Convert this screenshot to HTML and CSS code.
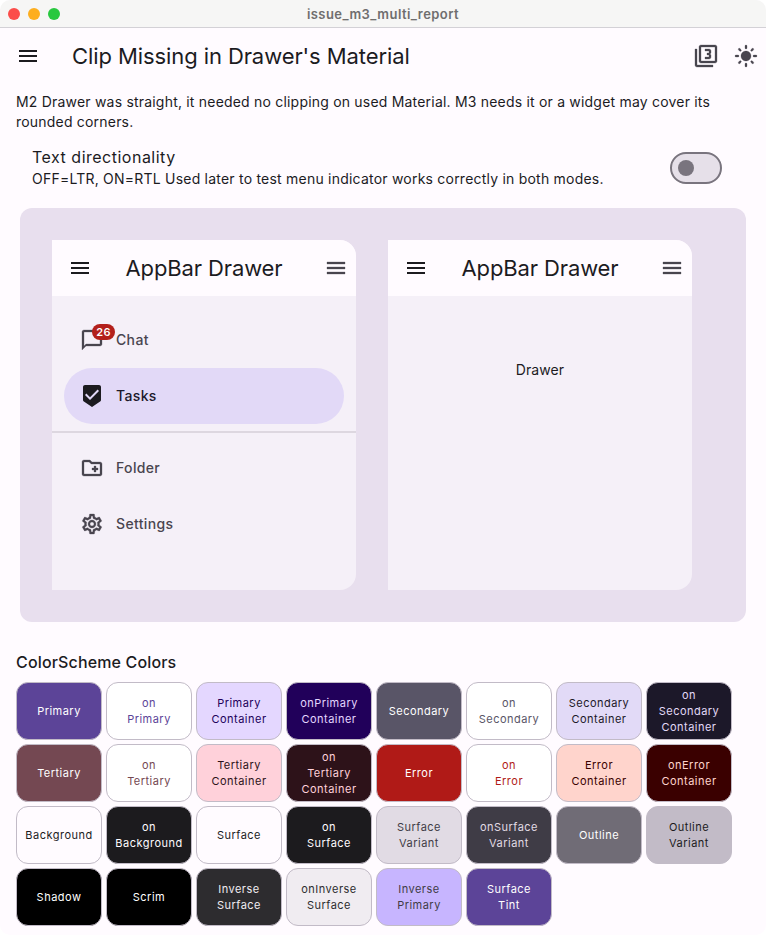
FILE: index.html
```html
<!DOCTYPE html>
<html lang="en">
<head>
    <meta charset="UTF-8">
    <meta name="viewport" content="width=device-width, initial-scale=1.0">
    <title>issue_m3_multi_report</title>
    <link rel="stylesheet" href="styles.css">
</head>

<body>
    <!-- shared icons -->
    <svg class="icon-defs" xmlns="http://www.w3.org/2000/svg">
        <symbol id="i-menu" viewBox="0 0 24 24"><path d="M3 18h18v-2H3v2zm0-5h18v-2H3v2zm0-7v2h18V6H3z"/></symbol>
    </svg>

    <header class="titlebar">
        <div class="lights">
            <span class="light red"></span>
            <span class="light yellow"></span>
            <span class="light green"></span>
        </div>
        <span class="window-title">issue_m3_multi_report</span>
    </header>

    <div class="appbar">
        <svg class="icon dark"><use href="#i-menu"/></svg>
        <h1>Clip Missing in Drawer's Material</h1>
        <svg class="icon mid" viewBox="0 0 24 24"><path d="M21 1H7c-1.1 0-2 .9-2 2v14c0 1.1.9 2 2 2h14c1.1 0 2-.9 2-2V3c0-1.1-.9-2-2-2zm0 16H7V3h14v14zM3 5H1v16c0 1.1.9 2 2 2h16v-2H3V5zm14 8v-1.5c0-.83-.67-1.5-1.5-1.5.83 0 1.5-.67 1.5-1.5V7c0-1.11-.9-2-2-2h-4v2h4v2h-2v2h2v2h-4v2h4c1.1 0 2-.89 2-2z"/></svg>
        <svg class="icon mid sun" viewBox="0 0 24 24"><path d="M12 7c-2.76 0-5 2.24-5 5s2.24 5 5 5 5-2.24 5-5-2.24-5-5-5zM2 13h2c.55 0 1-.45 1-1s-.45-1-1-1H2c-.55 0-1 .45-1 1s.45 1 1 1zm18 0h2c.55 0 1-.45 1-1s-.45-1-1-1h-2c-.55 0-1 .45-1 1s.45 1 1 1zM11 2v2c0 .55.45 1 1 1s1-.45 1-1V2c0-.55-.45-1-1-1s-1 .45-1 1zm0 18v2c0 .55.45 1 1 1s1-.45 1-1v-2c0-.55-.45-1-1-1s-1 .45-1 1zM5.99 4.58c-.39-.39-1.03-.39-1.41 0-.39.39-.39 1.03 0 1.41l1.06 1.06c.39.39 1.03.39 1.41 0s.39-1.03 0-1.41L5.99 4.58zm12.37 12.37c-.39-.39-1.03-.39-1.41 0-.39.39-.39 1.03 0 1.41l1.06 1.06c.39.39 1.03.39 1.41 0 .39-.39.39-1.03 0-1.41l-1.06-1.06zm1.06-10.96c.39-.39.39-1.03 0-1.41-.39-.39-1.03-.39-1.41 0l-1.06 1.06c-.39.39-.39 1.03 0 1.41s1.03.39 1.41 0l1.06-1.06zM7.05 18.36c.39-.39.39-1.03 0-1.41-.39-.39-1.03-.39-1.41 0l-1.06 1.06c-.39.39-.39 1.03 0 1.41s1.03.39 1.41 0l1.06-1.06z"/></svg>
    </div>

    <p class="intro">M2 Drawer was straight, it needed no clipping on used Material. M3 needs it or a widget may cover its rounded corners.</p>

    <div class="setting">
        <div class="setting-text">
            <div class="setting-title">Text directionality</div>
            <div class="setting-sub">OFF=LTR, ON=RTL Used later to test menu indicator works correctly in both modes.</div>
        </div>
        <div class="switch"><span class="thumb"></span></div>
    </div>

    <section class="panel">
        <div class="drawer">
            <div class="drawer-bar">
                <svg class="icon dark"><use href="#i-menu"/></svg>
                <span class="drawer-title">AppBar Drawer</span>
                <svg class="icon mid"><use href="#i-menu"/></svg>
            </div>
            <nav class="drawer-body">
                <div class="dest">
                    <span class="dest-icon">
                        <svg class="icon mid" viewBox="0 0 24 24"><path d="M20 2H4c-1.1 0-2 .9-2 2v18l4-4h14c1.1 0 2-.9 2-2V4c0-1.1-.9-2-2-2zm0 14H6l-2 2V4h16v12z"/></svg>
                        <span class="badge">26</span>
                    </span>
                    <span class="dest-label">Chat</span>
                </div>
                <div class="dest selected">
                    <span class="dest-icon">
                        <svg class="icon dark" viewBox="0 0 24 24"><path d="M19 1H5c-1.1 0-1.99.9-1.99 2L3 15.93c0 .69.35 1.3.88 1.66L12 23l8.11-5.41c.53-.36.88-.97.88-1.66L21 3c0-1.1-.9-2-2-2zm-9 15l-5-5 1.41-1.41L10 13.17l7.59-7.59L19 7l-9 9z"/></svg>
                    </span>
                    <span class="dest-label">Tasks</span>
                </div>
                <div class="divider"></div>
                <div class="dest">
                    <span class="dest-icon">
                        <svg class="icon mid" viewBox="0 0 24 24"><path d="M20 6h-8l-2-2H4c-1.11 0-1.99.89-1.99 2L2 18c0 1.11.89 2 2 2h16c1.11 0 2-.89 2-2V8c0-1.11-.89-2-2-2zm0 12H4V6h5.17l2 2H20v10zm-8-4h2v2h2v-2h2v-2h-2v-2h-2v2h-2z"/></svg>
                    </span>
                    <span class="dest-label">Folder</span>
                </div>
                <div class="dest">
                    <span class="dest-icon">
                        <svg class="icon mid" viewBox="0 0 24 24"><path d="M19.43 12.98c.04-.32.07-.64.07-.98 0-.34-.03-.66-.07-.98l2.11-1.65c.19-.15.24-.42.12-.64l-2-3.46c-.09-.16-.26-.25-.44-.25-.06 0-.12.01-.17.03l-2.49 1c-.52-.4-1.08-.73-1.69-.98l-.38-2.65C14.46 2.18 14.25 2 14 2h-4c-.25 0-.46.18-.49.42l-.38 2.65c-.61.25-1.17.59-1.69.98l-2.49-1c-.06-.02-.12-.03-.18-.03-.17 0-.34.09-.43.25l-2 3.46c-.13.22-.07.49.12.64l2.11 1.65c-.04.32-.07.65-.07.98 0 .33.03.66.07.98l-2.11 1.65c-.19.15-.24.42-.12.64l2 3.46c.09.16.26.25.44.25.06 0 .12-.01.17-.03l2.49-1c.52.4 1.08.73 1.69.98l.38 2.65c.03.24.24.42.49.42h4c.25 0 .46-.18.49-.42l.38-2.65c.61-.25 1.17-.59 1.69-.98l2.49 1c.06.02.12.03.18.03.17 0 .34-.09.43-.25l2-3.46c.12-.22.07-.49-.12-.64l-2.11-1.65zm-1.98-1.71c.04.31.05.52.05.73 0 .21-.02.43-.05.73l-.14 1.13.89.7 1.08.84-.7 1.21-1.27-.51-1.04-.42-.9.68c-.43.32-.84.56-1.25.73l-1.06.43-.16 1.13-.2 1.35h-1.4l-.19-1.35-.16-1.13-1.06-.43c-.43-.18-.83-.41-1.23-.71l-.91-.7-1.06.43-1.27.51-.7-1.21 1.08-.84.89-.7-.14-1.13c-.03-.31-.05-.54-.05-.74s.02-.43.05-.73l.14-1.13-.89-.7-1.08-.84.7-1.21 1.27.51 1.04.42.9-.68c.43-.32.84-.56 1.25-.73l1.06-.43.16-1.13.2-1.35h1.39l.19 1.35.16 1.13 1.06.43c.43.18.83.41 1.23.71l.91.7 1.06-.43 1.27-.51.7 1.21-1.07.85-.89.7.14 1.13zM12 8c-2.21 0-4 1.79-4 4s1.79 4 4 4 4-1.79 4-4-1.79-4-4-4zm0 6c-1.1 0-2-.9-2-2s.9-2 2-2 2 .9 2 2-.9 2-2 2z"/></svg>
                    </span>
                    <span class="dest-label">Settings</span>
                </div>
            </nav>
        </div>

        <div class="drawer">
            <div class="drawer-bar">
                <svg class="icon dark"><use href="#i-menu"/></svg>
                <span class="drawer-title">AppBar Drawer</span>
                <svg class="icon mid"><use href="#i-menu"/></svg>
            </div>
            <div class="drawer-body plain">Drawer</div>
        </div>
    </section>

    <h2 class="colors-title">ColorScheme Colors</h2>
    <div class="colors">
        <div class="swatch primary">Primary</div>
        <div class="swatch on-primary">on<br>Primary</div>
        <div class="swatch primary-container">Primary<br>Container</div>
        <div class="swatch on-primary-container">onPrimary<br>Container</div>
        <div class="swatch secondary">Secondary</div>
        <div class="swatch on-secondary">on<br>Secondary</div>
        <div class="swatch secondary-container">Secondary<br>Container</div>
        <div class="swatch on-secondary-container">on<br>Secondary<br>Container</div>

        <div class="swatch tertiary">Tertiary</div>
        <div class="swatch on-tertiary">on<br>Tertiary</div>
        <div class="swatch tertiary-container">Tertiary<br>Container</div>
        <div class="swatch on-tertiary-container">on<br>Tertiary<br>Container</div>
        <div class="swatch error">Error</div>
        <div class="swatch on-error">on<br>Error</div>
        <div class="swatch error-container">Error<br>Container</div>
        <div class="swatch on-error-container">onError<br>Container</div>

        <div class="swatch background">Background</div>
        <div class="swatch on-background">on<br>Background</div>
        <div class="swatch background">Surface</div>
        <div class="swatch on-background">on<br>Surface</div>
        <div class="swatch surface-variant">Surface<br>Variant</div>
        <div class="swatch on-surface-variant">onSurface<br>Variant</div>
        <div class="swatch outline">Outline</div>
        <div class="swatch outline-variant">Outline<br>Variant</div>

        <div class="swatch black">Shadow</div>
        <div class="swatch black">Scrim</div>
        <div class="swatch inverse-surface">Inverse<br>Surface</div>
        <div class="swatch on-inverse-surface">onInverse<br>Surface</div>
        <div class="swatch inverse-primary">Inverse<br>Primary</div>
        <div class="swatch primary">Surface<br>Tint</div>
    </div>
</body>
</html>
```

FILE: styles.css
```css
html {
    background-color: #fff;
}

body {
    margin: 0;
    height: 935px;
    overflow: hidden;
    border-radius: 10px;
    background-color: #fffbff;
    color: #1c1b1f;
    font-family: Inter, "Liberation Sans", sans-serif;
}

.icon-defs {
    display: none;
}

.icon {
    width: 24px;
    height: 24px;
    flex: none;
    display: block;
}

.icon.dark {
    fill: #1c1b1f;
}

.icon.mid {
    fill: #49454f;
    stroke: #49454f;
    stroke-width: 0.3;
}

/* Window chrome */
.titlebar {
    height: 28px;
    box-sizing: border-box;
    display: flex;
    align-items: center;
    justify-content: center;
    position: relative;
    background-color: #f6f6f5;
    border-bottom: 1px solid #d3d1d6;
}

.lights {
    position: absolute;
    left: 8px;
    top: 8px;
    display: flex;
    gap: 8px;
}

.light {
    width: 12px;
    height: 12px;
    border-radius: 50%;
}

.light.red { background-color: #fb4d4a; }
.light.yellow { background-color: #fdae1f; }
.light.green { background-color: #28c83f; }

.window-title {
    font-size: 13px;
    font-weight: 600;
    color: #6f6e6e;
    letter-spacing: 0.45px;
}

/* Top app bar */
.appbar {
    height: 56px;
    display: flex;
    align-items: center;
    padding: 0 8px 0 16px;
}

.appbar h1 {
    flex: 1;
    margin: 0 0 0 32px;
    font-size: 22px;
    font-weight: 400;
    line-height: 28px;
    letter-spacing: -0.09px;
}

.appbar .sun {
    margin-left: 16px;
}

.intro {
    margin: 8px 16px 0;
    font-size: 14px;
    line-height: 20px;
    letter-spacing: 0.2px;
}

.setting {
    display: flex;
    align-items: center;
    justify-content: space-between;
    height: 56px;
    padding: 0 44px 0 32px;
    margin-top: 7px;
}

.setting-title {
    font-size: 16px;
    line-height: 24px;
    letter-spacing: 0.5px;
}

.setting-sub {
    font-size: 14px;
    line-height: 20px;
    letter-spacing: 0.22px;
    color: #1c1b1f;
}

.switch {
    width: 52px;
    height: 32px;
    box-sizing: border-box;
    border: 2px solid #79747e;
    border-radius: 16px;
    background-color: #e6e0e9;
    display: flex;
    align-items: center;
    padding-left: 6px;
    margin-top: 1px;
}

.thumb {
    width: 16px;
    height: 16px;
    border-radius: 50%;
    background-color: #79747e;
}

/* Drawer preview */
.panel {
    margin: 13px 20px 0;
    height: 414px;
    box-sizing: border-box;
    padding: 32px;
    display: flex;
    gap: 32px;
    border-radius: 12px;
    background-color: #e8dfee;
}

.drawer {
    width: 304px;
    height: 350px;
    display: flex;
    flex-direction: column;
    border-radius: 0 16px 16px 0;
    overflow: hidden;
    background-color: #f5f0f8;
}

.drawer-bar {
    height: 56px;
    flex: none;
    display: flex;
    align-items: center;
    padding: 0 8px 0 16px;
    background-color: #fffbff;
}

.drawer-title {
    flex: 1;
    padding-right: 8px;
    text-align: center;
    font-size: 22px;
    line-height: 28px;
    letter-spacing: -0.12px;
}

.drawer-body {
    flex: 1;
    padding: 16px 12px 0;
}

.drawer-body.plain {
    padding: 64px 0 0;
    text-align: center;
    font-size: 14px;
    line-height: 20px;
    letter-spacing: 0.1px;
}

.dest {
    height: 56px;
    display: flex;
    align-items: center;
    gap: 12px;
    padding-left: 16px;
    border-radius: 28px;
    font-size: 14px;
    font-weight: 500;
    letter-spacing: 0.35px;
    color: #49454f;
}

.dest.selected {
    background-color: #e2d9f7;
    color: #1d192b;
}

.dest-icon {
    position: relative;
    display: block;
}

.dest-label {
    padding-bottom: 2px;
}

.badge {
    position: absolute;
    left: 12px;
    top: -4px;
    min-width: 23px;
    height: 16px;
    box-sizing: border-box;
    border-radius: 8px;
    background-color: #b3201b;
    color: #fff;
    font-size: 11px;
    font-weight: 600;
    line-height: 16px;
    text-align: center;
    letter-spacing: 0.4px;
}

.divider {
    height: 2px;
    margin: 7px -12px 7px;
    background-color: #ddd7e0;
}

/* Color scheme grid */
.colors-title {
    margin: 30px 16px 0;
    font-size: 16px;
    font-weight: 500;
    line-height: 20px;
    letter-spacing: 0.15px;
}

.colors {
    display: grid;
    grid-template-columns: repeat(8, 86px);
    grid-auto-rows: 58px;
    gap: 4px;
    margin: 10px 16px 0;
}

.swatch {
    box-sizing: border-box;
    display: flex;
    align-items: center;
    justify-content: center;
    text-align: center;
    border: 1px solid #c2bbc7;
    border-radius: 12px;
    font-size: 11px;
    font-weight: 420;
    line-height: 16px;
    letter-spacing: 0.48px;
}

.primary { background-color: #5c4498; color: #fff; }
.on-primary { background-color: #fff; color: #5c4498; }
.primary-container { background-color: #e4d7ff; color: #21005a; }
.on-primary-container { background-color: #21005a; color: #e4d7ff; }
.secondary { background-color: #595567; color: #fff; }
.on-secondary { background-color: #fff; color: #595567; }
.secondary-container { background-color: #e2daf7; color: #1c1829; }
.on-secondary-container { background-color: #1c1829; color: #e2daf7; }
.tertiary { background-color: #744852; color: #fff; }
.on-tertiary { background-color: #fff; color: #744852; }
.tertiary-container { background-color: #ffd1da; color: #2d1219; }
.on-tertiary-container { background-color: #2d1219; color: #ffd1da; }
.error { background-color: #b01a17; color: #fff; }
.on-error { background-color: #fff; color: #b01a17; }
.error-container { background-color: #ffd4cc; color: #3a0000; }
.on-error-container { background-color: #3a0000; color: #ffd4cc; }
.background { background-color: #fffbff; color: #1c1b1e; }
.on-background { background-color: #1c1b1e; color: #fffbff; }
.surface-variant { background-color: #e1dbe4; color: #3f3c46; }
.on-surface-variant { background-color: #3f3c46; color: #e1dbe4; }
.outline { background-color: #706c76; color: #fff; }
.outline-variant { background-color: #c2bbc7; color: #1c1b1e; }
.black { background-color: #000; color: #fff; }
.inverse-surface { background-color: #2d2c2f; color: #f0ecf1; }
.on-inverse-surface { background-color: #f0ecf1; color: #2d2c2f; }
.inverse-primary { background-color: #c7b5ff; color: #3f3c46; }
```
